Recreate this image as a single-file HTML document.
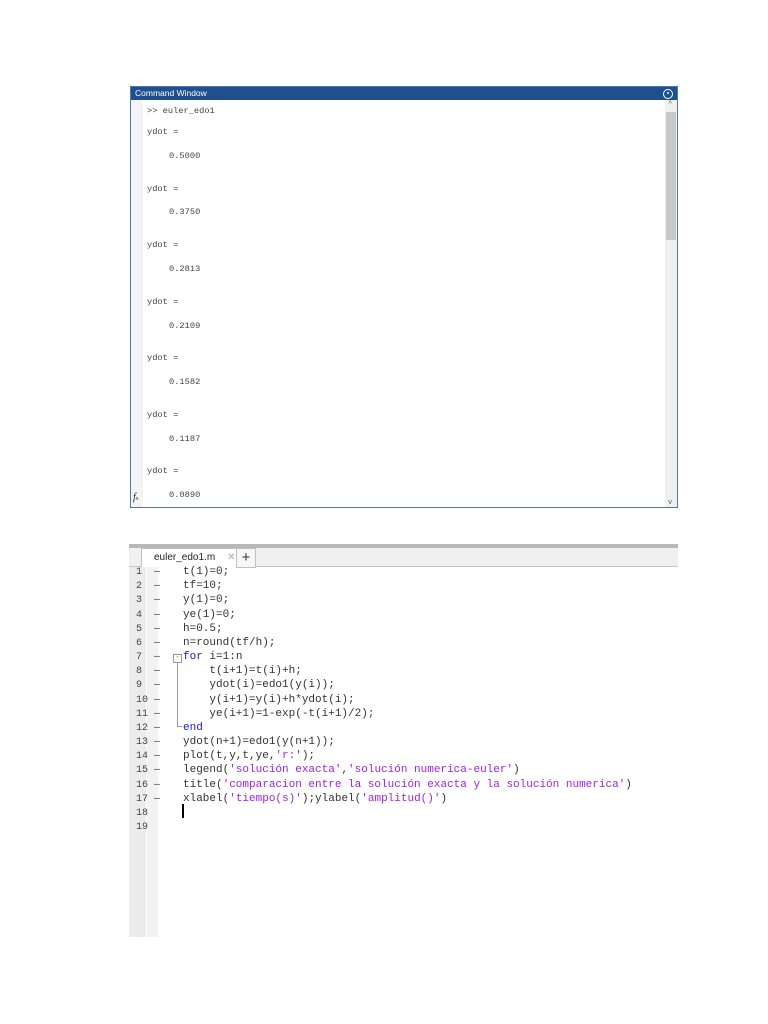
<!DOCTYPE html>
<html><head><meta charset="utf-8"><style>
body{margin:0;width:768px;height:1024px;background:#fff;position:relative;overflow:hidden;font-family:"Liberation Mono",monospace}
.a{position:absolute;white-space:pre}
.cw{position:absolute;left:130px;top:86px;width:546px;height:420px;border:1px solid #4a78b0;background:#fff}
.tb{position:absolute;left:0;top:0;right:0;height:13px;background:#1f4f8c;color:#fff;font:8.5px "Liberation Sans",sans-serif;line-height:13px;padding-left:4px}
.cl{position:absolute;font-size:8.7px;color:#444;white-space:pre}
.sb{position:absolute;left:534px;top:13px;width:12px;height:407px;background:#f0f0f0}
.th{position:absolute;left:1px;top:12px;width:10px;height:128px;background:#c9c9c9}
.ed{font-size:11px;color:#333}
.ln{font-size:10px;color:#444}
.k{color:#1a1acc}.s{color:#a020f0}
</style></head><body>
<div class="cw">
<div class="tb">Command Window</div>
<div style="position:absolute;right:4px;top:2px;width:8px;height:8px;border:1px solid #fff;border-radius:50%;font-size:6px;color:#fff;text-align:center;line-height:8px">▾</div>
<div style="position:absolute;left:0;top:13px;width:12px;height:407px;background:#f4f4f4"></div>
<div class="sb"><div class="th"></div><div style="position:absolute;top:0;left:3px;font-size:7px;color:#555">^</div><div style="position:absolute;bottom:0;left:3px;font-size:7px;color:#555">v</div></div>
<div class="cl" style="left:16px;top:19px">&gt;&gt; euler_edo1</div>
<div class="cl" style="left:16px;top:40px">ydot =</div><div class="cl" style="left:38px;top:64px">0.5000</div>
<div class="cl" style="left:16px;top:97px">ydot =</div><div class="cl" style="left:38px;top:120px">0.3750</div>
<div class="cl" style="left:16px;top:153px">ydot =</div><div class="cl" style="left:38px;top:177px">0.2813</div>
<div class="cl" style="left:16px;top:210px">ydot =</div><div class="cl" style="left:38px;top:234px">0.2109</div>
<div class="cl" style="left:16px;top:266px">ydot =</div><div class="cl" style="left:38px;top:290px">0.1582</div>
<div class="cl" style="left:16px;top:323px">ydot =</div><div class="cl" style="left:38px;top:347px">0.1187</div>
<div class="cl" style="left:16px;top:379px">ydot =</div><div class="cl" style="left:38px;top:403px">0.0890</div>
<div class="a" style="left:2px;top:405px;font:italic 10px 'Liberation Serif',serif;color:#222">f<span style="font-size:6px">x</span></div>
</div>

<div style="position:absolute;left:129px;top:544px;width:549px;height:4px;background:#b8b8b8"></div>
<div style="position:absolute;left:129px;top:548px;width:549px;height:18px;background:#f0f0f0;border-bottom:1px solid #c8c8c8"></div>
<div style="position:absolute;left:141px;top:548px;width:94px;height:19px;background:#fff;border:1px solid #c0c0c0;border-bottom:none;font:10px 'Liberation Sans',sans-serif;color:#222;line-height:18px"><span style="margin-left:12px">euler_edo1.m</span><span style="margin-left:12px;color:#aaa">✕</span></div>
<div style="position:absolute;left:236px;top:548px;width:18px;height:18px;background:#f7f7f7;border:1px solid #c0c0c0;font:15px 'Liberation Sans',sans-serif;text-align:center;line-height:17px;color:#333">+</div>
<div style="position:absolute;left:129px;top:567px;width:17px;height:370px;background:#ececec"></div>
<div style="position:absolute;left:147px;top:567px;width:11px;height:370px;background:#f2f2f2"></div>
<div class="a ln" style="left:136px;top:566px;line-height:14.17px">1  —
2  —
3  —
4  —
5  —
6  —
7  —
8  —
9  —
10 —
11 —
12 —
13 —
14 —
15 —
16 —
17 —
18
19</div>
<div style="position:absolute;left:173px;top:654px;width:7px;height:7px;border:1px solid #999;font-size:7px;line-height:7px;text-align:center;color:#666;background:#fff">-</div>
<div style="position:absolute;left:177px;top:662px;width:1px;height:64px;background:#999"></div>
<div style="position:absolute;left:177px;top:726px;width:5px;height:1px;background:#999"></div>
<div class="a ed" style="left:183px;top:565px;line-height:14.17px">t(1)=0;
tf=10;
y(1)=0;
ye(1)=0;
h=0.5;
n=round(tf/h);
<span class="k">for</span> i=1:n
    t(i+1)=t(i)+h;
    ydot(i)=edo1(y(i));
    y(i+1)=y(i)+h*ydot(i);
    ye(i+1)=1-exp(-t(i+1)/2);
<span class="k">end</span>
ydot(n+1)=edo1(y(n+1));
plot(t,y,t,ye,<span class="s">'r:'</span>);
legend(<span class="s">'solución exacta'</span>,<span class="s">'solución numerica-euler'</span>)
title(<span class="s">'comparacion entre la solución exacta y la solución numerica'</span>)
xlabel(<span class="s">'tiempo(s)'</span>);ylabel(<span class="s">'amplitud()'</span>)
</div>
<div style="position:absolute;left:182px;top:804px;width:2px;height:14px;background:#000"></div>
</body></html>
